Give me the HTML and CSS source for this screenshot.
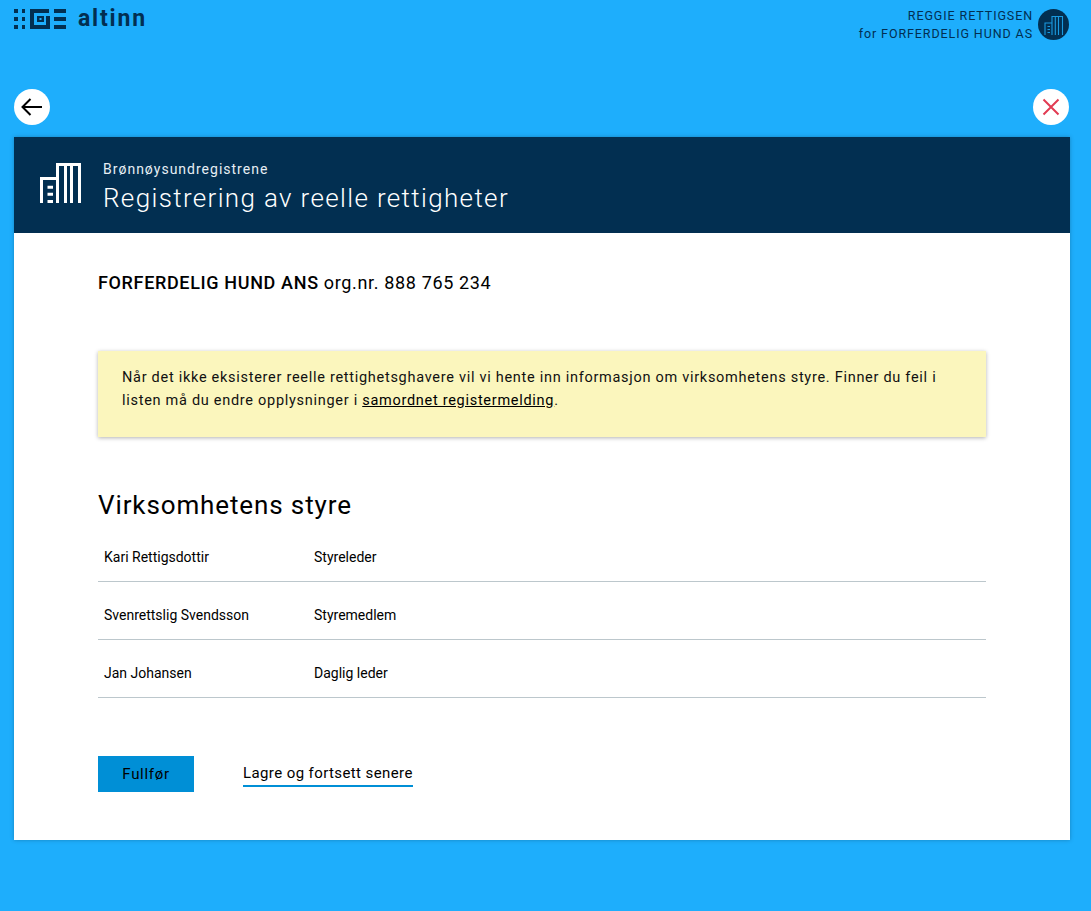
FILE: index.html
```html
<!DOCTYPE html>
<html lang="nb">
<head>
<meta charset="utf-8">
<title>Registrering av reelle rettigheter</title>
<link rel="stylesheet" href="styles.css">
</head>
<body>
<header class="topbar">
  <div class="brand">
    <svg class="brand-mark" width="52" height="20" viewBox="0 0 52 20" aria-hidden="true">
      <g fill="#022f51">
        <rect x="0" y="0" width="4" height="4"/><rect x="8" y="0" width="3" height="4"/>
        <rect x="0" y="8" width="4" height="4"/><rect x="8" y="8" width="3" height="4"/>
        <rect x="0" y="16" width="4" height="4"/><rect x="8" y="16" width="3" height="4"/>
        <path d="M16 0h19v4H20v12h12V7h4v13H16z"/>
        <path fill-rule="evenodd" d="M23 7h7v6h-7zM25.500 9h2v2h-2z"/>
        <rect x="40" y="0" width="12" height="4"/><rect x="40" y="8" width="12" height="4"/><rect x="40" y="16" width="12" height="4"/>
      </g>
    </svg>
    <span class="brand-name">altinn</span>
  </div>
  <div class="user">
    <div class="user-text">
      <div>REGGIE RETTIGSEN</div>
      <div>for FORFERDELIG HUND AS</div>
    </div>
    <span class="avatar">
      <svg width="20" height="20" viewBox="0 0 20 20" aria-hidden="true" fill="none" stroke="#1a9ae0" stroke-width="1.100">
        <path d="M8 20V1.500h10.500V20M11.300 2v18M14.500 2v18"/>
        <path d="M8 8H1v12M3.500 11.500h2.500M3.500 14.500h2.500M3.500 17.500h2.500"/>
      </svg>
    </span>
  </div>
</header>

<nav class="actions">
  <button class="round" type="button" aria-label="Tilbake">
    <svg width="24" height="20" viewBox="0 0 24 20" aria-hidden="true" fill="none" stroke="#000" stroke-width="2">
      <path d="M22 10H2.500M10.500 2 2.500 10l8 8"/>
    </svg>
  </button>
  <button class="round" type="button" aria-label="Lukk">
    <svg width="18" height="18" viewBox="0 0 18 18" aria-hidden="true" fill="none" stroke="#e23b53" stroke-width="2">
      <path d="M1.500 1.500l15 15M16.500 1.500l-15 15"/>
    </svg>
  </button>
</nav>

<main class="card">
  <div class="card-head">
    <svg class="head-icon" width="41" height="40" viewBox="0 0 41 40" aria-hidden="true" fill="none" stroke="#fff" stroke-width="3">
      <path d="M17.500 40V1.500h22V40M25.500 3v37M31.500 3v37"/>
      <path d="M17 15.500H1.500V40"/>
      <path d="M7.500 24.300h5.500M7.500 31.300h5.500M7.500 38.500h5.500"/>
    </svg>
    <div class="head-text">
      <div class="head-sub">Brønnøysundregistrene</div>
      <h1 class="head-title">Registrering av reelle rettigheter</h1>
    </div>
  </div>
  <div class="card-body">
    <p class="org"><strong>FORFERDELIG HUND ANS</strong> org.nr. 888 765 234</p>
    <div class="notice">
      Når det ikke eksisterer reelle rettighetsghavere vil vi hente inn informasjon om virksomhetens styre. Finner du feil i listen må du endre opplysninger i <a href="#">samordnet registermelding</a>.
    </div>
    <h2 class="section-title">Virksomhetens styre</h2>
    <ul class="board">
      <li class="board-row"><span>Kari Rettigsdottir</span><span>Styreleder</span></li>
      <li class="board-row"><span>Svenrettslig Svendsson</span><span>Styremedlem</span></li>
      <li class="board-row"><span>Jan Johansen</span><span>Daglig leder</span></li>
    </ul>
    <div class="form-actions">
      <button class="primary" type="button">Fullfør</button>
      <a class="later" href="#">Lagre og fortsett senere</a>
    </div>
  </div>
</main>
</body>
</html>
```
FILE: styles.css
```css
* { box-sizing: border-box; }
html, body { height: 100%; }
body {
  margin: 0;
  background: #1eaefc;
  font-family: "Roboto", "Liberation Sans", sans-serif;
  color: #000;
  overflow: hidden;
}
.topbar {
  display: flex;
  justify-content: space-between;
  align-items: flex-start;
  height: 89px;
  padding: 9px 22px 0 14px;
}
.brand { display: flex; align-items: center; gap: 12px; height: 20px; color: #022f51; }
.brand-mark { display: block; }
.brand-name { font-size: 23px; font-weight: 700; letter-spacing: 1.800px; line-height: 20px; }
.user { display: flex; gap: 5px; align-items: flex-start; color: #022f51; }
.user-text { text-align: right; font-size: 12.500px; line-height: 18px; letter-spacing: 0.900px; margin-top: -2px; }
.avatar {
  width: 31px; height: 31px; border-radius: 50%;
  background: #022f51;
  display: flex; align-items: center; justify-content: center;
}
.actions {
  display: flex;
  justify-content: space-between;
  padding: 0 22px 0 14px;
  height: 48px;
}
.round {
  width: 36px; height: 36px; border-radius: 50%;
  background: #fff; border: 0; padding: 0;
  display: flex; align-items: center; justify-content: center;
}
.card {
  margin: 0 21px 0 14px;
  background: #fff;
  box-shadow: 0 0 4px rgba(0, 0, 0, 0.25);
}
.card-head {
  height: 96px;
  background: #022f51;
  color: #fff;
  display: flex;
  align-items: center;
  padding: 0 0 0 26px;
  gap: 22px;
}
.head-icon { display: block; flex: none; margin-bottom: 4px; }
.head-text { padding-top: 3px; }
.head-sub { font-size: 14px; line-height: 20px; letter-spacing: 1px; color: #e6eef4; }
.head-title { margin: 2px 0 0; font-size: 26px; line-height: 34px; font-weight: 300; letter-spacing: 1.350px; }
.card-body { padding: 36px 84px 48px; }
.org { margin: 0; font-size: 18px; line-height: 28px; letter-spacing: 0.650px; }
.org strong { font-weight: 500; }
.notice {
  margin-top: 54px;
  height: 86px;
  background: #fbf6bd;
  box-shadow: 0 1px 4px rgba(0, 0, 0, 0.3);
  padding: 15px 24px 0;
  font-size: 14.500px;
  line-height: 23px;
  letter-spacing: 0.715px;
  color: #111;
}
.notice a { color: #000; }
.section-title {
  margin: 51px 0 0;
  font-size: 26px;
  line-height: 34px;
  font-weight: 400;
  letter-spacing: 0.880px;
}
.board { list-style: none; margin: 2px 0 0; padding: 0; }
.board-row {
  display: grid;
  grid-template-columns: 210px 1fr;
  height: 58px;
  padding: 8px 6px 0;
  align-items: center;
  border-bottom: 1px solid #bcc7cc;
  font-size: 14px;
}
.form-actions { display: flex; align-items: center; gap: 49px; margin-top: 58px; }
.primary {
  width: 96px; height: 36px;
  background: #008fd6;
  border: 0; padding: 0;
  font: inherit; font-size: 15px; letter-spacing: 0.700px; color: #000;
}
.later {
  color: #000;
  text-decoration: none;
  font-size: 15px;
  letter-spacing: 0.400px;
  line-height: 20px;
  border-bottom: 2px solid #008fd6;
  padding-bottom: 2px;
  margin-top: 2px;
}
```
